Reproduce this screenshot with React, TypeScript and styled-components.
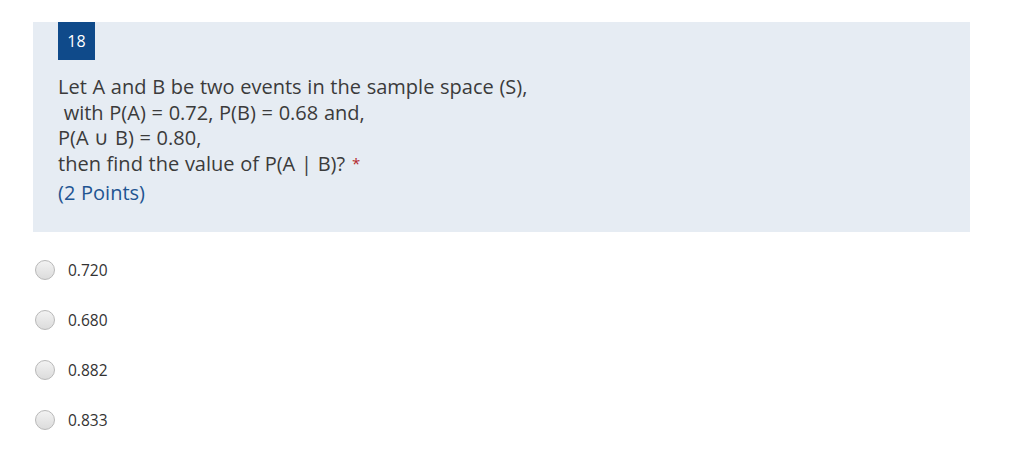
import styled, { createGlobalStyle } from "styled-components"

const GlobalStyle = createGlobalStyle`
    body {
        margin: 0;
        background: #ffffff;
        font-family: "Open Sans", "Noto Sans", sans-serif;
    }
`

const Page = styled.div`
    padding: 22px 39px 0 33px;
`

const QuestionPanel = styled.div`
    background: #e6ecf3;
    height: 210px;
    padding: 0 25px;
    box-sizing: border-box;
`

const Badge = styled.div`
    width: 37px;
    height: 38px;
    background: #0f4a8a;
    color: #ffffff;
    font-size: 16px;
    display: flex;
    align-items: center;
    justify-content: center;
`

const QuestionText = styled.div`
    margin-top: 14px;
    color: #3b3b3b;
    font-size: 20px;
    line-height: 25.5px;
    word-spacing: 0.5px;
`

const Line = styled.div`
    white-space: pre;
`

const Required = styled.span`
    color: #b3262c;
    font-size: 15px;
    margin-left: 7px;
    vertical-align: 2px;
`

const Points = styled.div`
    color: #1f5592;
    margin-top: 4px;
`

const Options = styled.div`
    display: flex;
    flex-direction: column;
    gap: 30px;
    padding: 28px 0 0 2px;
`

const Option = styled.label`
    display: flex;
    align-items: center;
    gap: 13px;
    height: 20px;
    font-size: 15.5px;
    color: #333333;
`

const Radio = styled.span`
    width: 18px;
    height: 18px;
    border-radius: 50%;
    border: 1px solid #b8b8b8;
    background: linear-gradient(#f2f2f2, #dcdcdc);
`

const answers = ["0.720", "0.680", "0.882", "0.833"]

export default function App(): JSX.Element {
    return (
        <Page>
            <GlobalStyle />
            <QuestionPanel>
                <Badge>18</Badge>
                <QuestionText>
                    <Line>Let A and B be two events in the sample space (S),</Line>
                    <Line> with P(A) = 0.72, P(B) = 0.68 and,</Line>
                    <Line>P(A ∪ B) = 0.80,</Line>
                    <Line>then find the value of P(A | B)?<Required>*</Required></Line>
                    <Points>(2 Points)</Points>
                </QuestionText>
            </QuestionPanel>
            <Options>
                {answers.map(a => (
                    <Option key={a}>
                        <Radio />
                        {a}
                    </Option>
                ))}
            </Options>
        </Page>
    )
}
